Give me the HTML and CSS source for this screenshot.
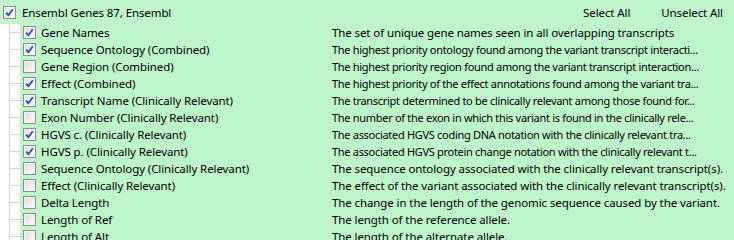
FILE: index.html
```html
<!DOCTYPE html>
<html>
<head>
<meta charset="utf-8">
<link rel="stylesheet" href="styles.css">
</head>
<body>
<div class="panel">
  <div class="header">
    <span class="cb checked"><svg viewBox="0 0 13 13" width="13" height="13"><path d="M3.2 6.6 L5.4 9.2 L9.8 3.2" fill="none" stroke="#2a4fb0" stroke-width="1.8"/></svg></span>
    <span class="title">Ensembl Genes 87, Ensembl</span>
    <span class="actions"><span class="act">Select All</span><span class="act">Unselect All</span></span>
  </div>
  <div class="rows">
    <div class="row"><div class="tree"></div><div class="cell"><span class="cb checked"><svg viewBox="0 0 13 13" width="13" height="13"><path d="M3.2 6.6 L5.4 9.2 L9.8 3.2" fill="none" stroke="#2a4fb0" stroke-width="1.8"/></svg></span><span class="name">Gene Names</span><span class="desc">The set of unique gene names seen in all overlapping transcripts</span></div></div>
    <div class="row"><div class="tree"></div><div class="cell"><span class="cb checked"><svg viewBox="0 0 13 13" width="13" height="13"><path d="M3.2 6.6 L5.4 9.2 L9.8 3.2" fill="none" stroke="#2a4fb0" stroke-width="1.8"/></svg></span><span class="name">Sequence Ontology (Combined)</span><span class="desc cut">The highest priority ontology found among the variant transcript interacti...</span></div></div>
    <div class="row"><div class="tree"></div><div class="cell"><span class="cb"></span><span class="name">Gene Region (Combined)</span><span class="desc cut">The highest priority region found among the variant transcript interaction...</span></div></div>
    <div class="row"><div class="tree"></div><div class="cell"><span class="cb checked"><svg viewBox="0 0 13 13" width="13" height="13"><path d="M3.2 6.6 L5.4 9.2 L9.8 3.2" fill="none" stroke="#2a4fb0" stroke-width="1.8"/></svg></span><span class="name">Effect (Combined)</span><span class="desc cut">The highest priority of the effect annotations found among the variant tra...</span></div></div>
    <div class="row"><div class="tree"></div><div class="cell"><span class="cb checked"><svg viewBox="0 0 13 13" width="13" height="13"><path d="M3.2 6.6 L5.4 9.2 L9.8 3.2" fill="none" stroke="#2a4fb0" stroke-width="1.8"/></svg></span><span class="name">Transcript Name (Clinically Relevant)</span><span class="desc cut">The transcript determined to be clinically relevant among those found for...</span></div></div>
    <div class="row"><div class="tree"></div><div class="cell"><span class="cb"></span><span class="name">Exon Number (Clinically Relevant)</span><span class="desc cut">The number of the exon in which this variant is found in the clinically rele...</span></div></div>
    <div class="row"><div class="tree"></div><div class="cell"><span class="cb checked"><svg viewBox="0 0 13 13" width="13" height="13"><path d="M3.2 6.6 L5.4 9.2 L9.8 3.2" fill="none" stroke="#2a4fb0" stroke-width="1.8"/></svg></span><span class="name">HGVS c. (Clinically Relevant)</span><span class="desc cut">The associated HGVS coding DNA notation with the clinically relevant tra...</span></div></div>
    <div class="row"><div class="tree"></div><div class="cell"><span class="cb checked"><svg viewBox="0 0 13 13" width="13" height="13"><path d="M3.2 6.6 L5.4 9.2 L9.8 3.2" fill="none" stroke="#2a4fb0" stroke-width="1.8"/></svg></span><span class="name">HGVS p. (Clinically Relevant)</span><span class="desc cut">The associated HGVS protein change notation with the clinically relevant t...</span></div></div>
    <div class="row"><div class="tree"></div><div class="cell"><span class="cb"></span><span class="name">Sequence Ontology (Clinically Relevant)</span><span class="desc">The sequence ontology associated with the clinically relevant transcript(s).</span></div></div>
    <div class="row"><div class="tree"></div><div class="cell"><span class="cb"></span><span class="name">Effect (Clinically Relevant)</span><span class="desc">The effect of the variant associated with the clinically relevant transcript(s).</span></div></div>
    <div class="row"><div class="tree"></div><div class="cell"><span class="cb"></span><span class="name">Delta Length</span><span class="desc">The change in the length of the genomic sequence caused by the variant.</span></div></div>
    <div class="row"><div class="tree"></div><div class="cell"><span class="cb"></span><span class="name">Length of Ref</span><span class="desc">The length of the reference allele.</span></div></div>
    <div class="row"><div class="tree"></div><div class="cell"><span class="cb"></span><span class="name">Length of Alt</span><span class="desc">The length of the alternate allele.</span></div></div>
  </div>
</div>
</body>
</html>
```
FILE: styles.css
```css
html, body {
  margin: 0;
  padding: 0;
  background: #ffffff;
}
body {
  font-family: "Noto Sans", "Open Sans", sans-serif;
  font-size: 11.5px;
  letter-spacing: -0.1px;
  color: #000;
  width: 734px;
  height: 240px;
  overflow: hidden;
}
.panel {
  width: 734px;
}
.header {
  height: 24px;
  background: #bef5cb;
  display: flex;
  align-items: center;
  padding-left: 3px;
  box-sizing: border-box;
}
.title {
  margin-left: 6px;
  white-space: nowrap;
}
.actions {
  margin-left: auto;
  display: flex;
  gap: 31px;
  padding-right: 11px;
}
.rows {
  display: flex;
  flex-direction: column;
}
.row {
  display: flex;
  height: 17px;
}
.tree {
  width: 20px;
  flex: none;
  background: #fff;
  position: relative;
}
.tree::before {
  content: "";
  position: absolute;
  left: 9px;
  top: 0;
  bottom: 0;
  width: 1px;
  background: #d4d4d4;
}
.tree::after {
  content: "";
  position: absolute;
  left: 9px;
  right: 0;
  top: 8px;
  height: 1px;
  background: #d4d4d4;
}
.cell {
  flex: 1;
  background: #bef5cb;
  display: flex;
  align-items: center;
  padding-left: 3px;
  white-space: nowrap;
  overflow: hidden;
}
.cb {
  width: 13px;
  height: 13px;
  flex: none;
  box-sizing: border-box;
  border: 1px solid #8f8f8f;
  background: linear-gradient(135deg, #dcdcdc 0%, #f0f0f0 60%, #fafafa 100%);
  box-shadow: inset 0 0 0 1px #f4f4f4;
  display: flex;
  align-items: center;
  justify-content: center;
}
.cb svg {
  display: block;
  margin: -1px;
}
.name {
  margin-left: 5px;
  width: 291px;
  flex: none;
}
.desc {
  flex: none;
}
.desc.cut {
  font-size: 11px;
  letter-spacing: -0.3px;
}
```
